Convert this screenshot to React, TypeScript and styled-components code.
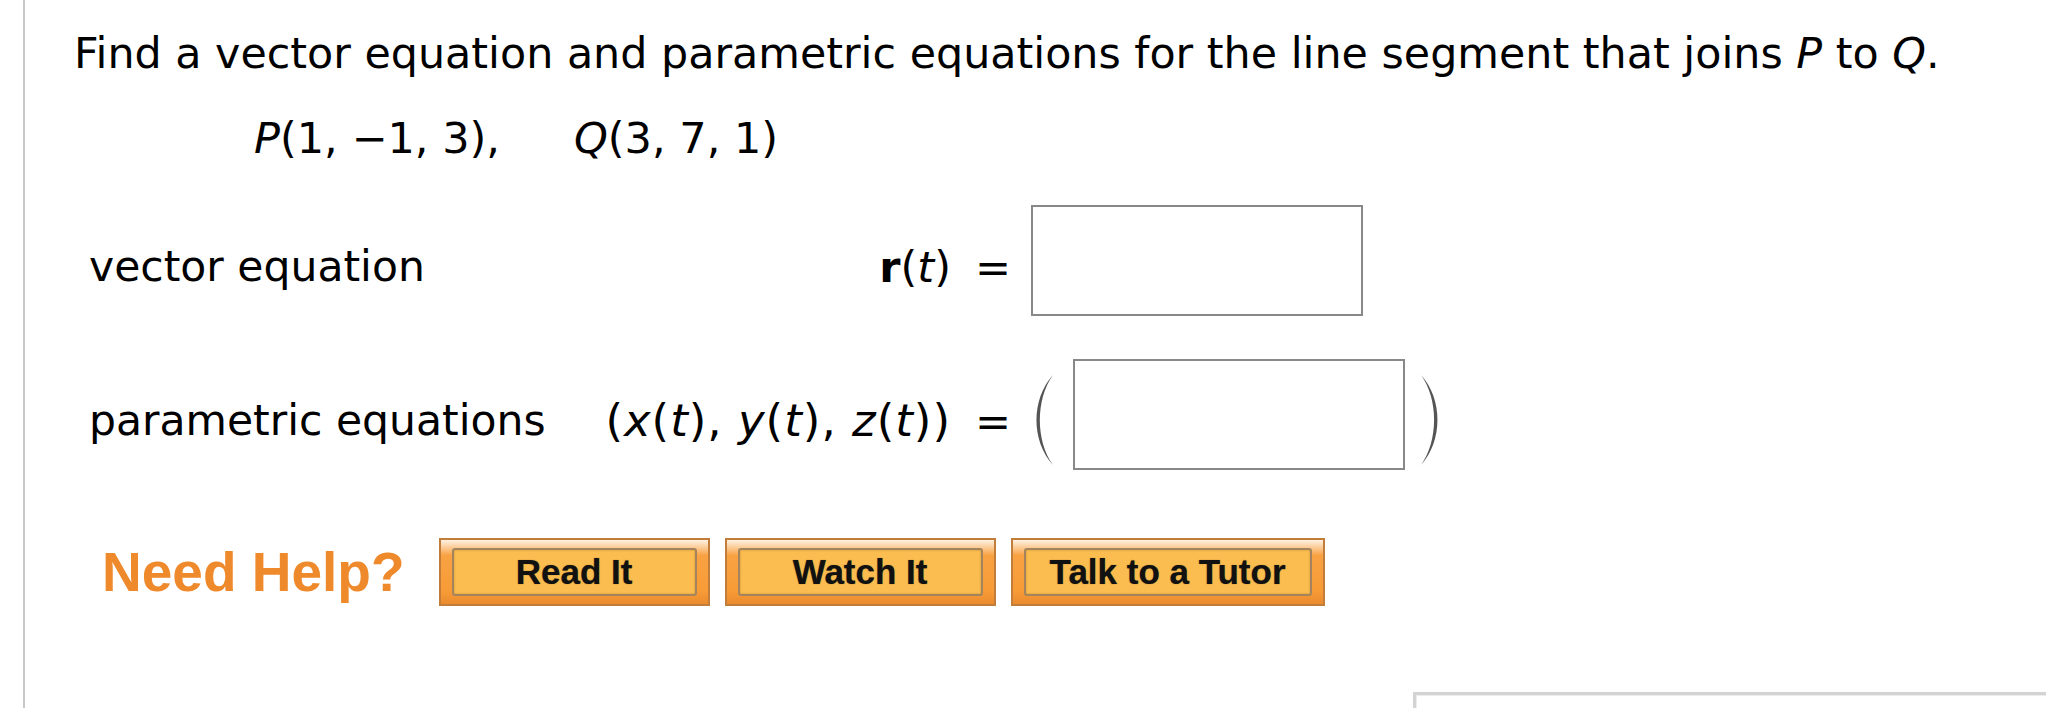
import React from "react";
import styled, { createGlobalStyle } from "styled-components";

const GlobalStyle = createGlobalStyle`
  html, body { margin: 0; padding: 0; background: #fff; overflow: hidden; }
  body { font-family: "DejaVu Sans", Verdana, sans-serif; color: #000; }
`;

const Page = styled.div`
  width: 2046px;
  height: 708px;
  display: flex;
  background: #fff;
`;

const Frame = styled.div`
  margin-left: 23px;
  border-left: 2px solid #c8c8c8;
  flex: 1;
  height: 708px;
  overflow: hidden;
  display: flex;
  flex-direction: column;
  padding: 28px 0 0 49px;
  box-sizing: border-box;
`;

const Title = styled.div`
  font-size: 42.8px;
  line-height: 50px;
  white-space: nowrap;
`;

const Points = styled.div`
  margin-top: 35px;
  padding-left: 180px;
  font-size: 43px;
  line-height: 50px;
  white-space: nowrap;
`;

const PointGap = styled.span`
  display: inline-block;
  width: 74px;
`;

const Answers = styled.div`
  margin-left: 15px;
  display: flex;
  flex-direction: column;
`;

const Row = styled.div<{ $top: number }>`
  display: grid;
  grid-template-columns: 450px 452px auto;
  column-gap: 20px;
  align-items: center;
  margin-top: ${(p) => p.$top}px;
`;

const Label = styled.div`
  font-size: 42.5px;
  line-height: 50px;
  padding-top: 13px;
  white-space: nowrap;
`;

const Expr = styled.div<{ $size?: number; $spacing?: number }>`
  font-size: ${(p) => p.$size ?? 43}px;
  line-height: 50px;
  padding-top: 13px;
  text-align: right;
  white-space: nowrap;
  letter-spacing: ${(p) => p.$spacing ?? 0}px;
`;

const Eq = styled.span`
  margin-left: 24px;
  letter-spacing: 0;
  font-size: 43px;
`;

const Bold = styled.b`
  font-weight: 700;
`;

const AnswerCell = styled.div`
  display: flex;
  align-items: center;
`;

const InputBox = styled.div`
  width: 332px;
  height: 111px;
  box-sizing: border-box;
  border: 2px solid #888;
  background: #fff;
`;

const ParenSvg = styled.svg<{ $gap: number; $side: "l" | "r" }>`
  width: 23px;
  height: 92px;
  margin-top: 11px;
  flex-shrink: 0;
  ${(p) => (p.$side === "l" ? `margin-right: ${p.$gap}px;` : `margin-left: ${p.$gap}px;`)}
`;

const HelpRow = styled.div`
  margin-top: 68px;
  margin-left: 28px;
  display: flex;
  align-items: center;
  gap: 15px;
`;

const NeedHelp = styled.span`
  font-family: "Liberation Sans", Arial, sans-serif;
  font-weight: 700;
  font-size: 55px;
  line-height: 60px;
  color: #ef8a2c;
  margin-right: 19px;
  white-space: nowrap;
`;

const HelpButton = styled.button<{ $w: number }>`
  width: ${(p) => p.$w}px;
  height: 68px;
  padding: 0;
  box-sizing: border-box;
  border: 2px solid #c27d3b;
  background: linear-gradient(
    to bottom,
    #fff2e2 0%,
    #fcd4a8 9%,
    #f9a243 24%,
    #f79b36 80%,
    #ea8b2e 100%
  );
  display: flex;
  cursor: pointer;
`;

const ButtonFace = styled.span`
  flex: 1;
  margin: 8px 11px;
  border: 2px solid #a4845c;
  border-radius: 3px;
  background: #fbbd4f;
  box-shadow: inset 0 0 2px rgba(120, 80, 30, 0.45);
  font-family: "Liberation Sans", Arial, sans-serif;
  font-weight: 700;
  font-size: 35px;
  line-height: 44px;
  color: #111;
  text-shadow: 0 0 1px rgba(0, 0, 0, 0.55);
  text-align: center;
  white-space: nowrap;
`;

const NextBox = styled.div`
  margin-top: 86px;
  margin-left: 1339px;
  width: 700px;
  height: 60px;
  flex-shrink: 0;
  box-sizing: border-box;
  border: 3px solid #d3d3d3;
  box-shadow: inset 0 0 0 1px #ececec;
`;

const Paren = ({ side, gap }: { side: "l" | "r"; gap: number }) => (
  <ParenSvg $side={side} $gap={gap} viewBox="0 0 23 92">
    {side === "l" ? (
      <path d="M22 1 C0 25, 0 67, 22 91 C4.5 67, 4.5 25, 22 1 Z" fill="#555" />
    ) : (
      <path d="M1 1 C23 25, 23 67, 1 91 C18.5 67, 18.5 25, 1 1 Z" fill="#555" />
    )}
  </ParenSvg>
);

export default function App() {
  return (
    <>
      <GlobalStyle />
      <Page>
        <Frame>
          <Title>
            Find a vector equation and parametric equations for the line segment that joins <i>P</i> to <i>Q</i>.
          </Title>
          <Points>
            <i>P</i>(1, −1, 3),
            <PointGap />
            <i>Q</i>(3, 7, 1)
          </Points>
          <Answers>
            <Row $top={42}>
              <Label>vector equation</Label>
              <Expr>
                <Bold>r</Bold>(<i>t</i>)<Eq>=</Eq>
              </Expr>
              <AnswerCell>
                <InputBox />
              </AnswerCell>
            </Row>
            <Row $top={43}>
              <Label>parametric equations</Label>
              <Expr $size={45} $spacing={1}>
                (<i>x</i>(<i>t</i>), <i>y</i>(<i>t</i>), <i>z</i>(<i>t</i>))<Eq>=</Eq>
              </Expr>
              <AnswerCell>
                <Paren side="l" gap={19} />
                <InputBox />
                <Paren side="r" gap={15} />
              </AnswerCell>
            </Row>
          </Answers>
          <HelpRow>
            <NeedHelp>Need Help?</NeedHelp>
            <HelpButton $w={271}>
              <ButtonFace>Read It</ButtonFace>
            </HelpButton>
            <HelpButton $w={271}>
              <ButtonFace>Watch It</ButtonFace>
            </HelpButton>
            <HelpButton $w={314}>
              <ButtonFace>Talk to a Tutor</ButtonFace>
            </HelpButton>
          </HelpRow>
          <NextBox />
        </Frame>
      </Page>
    </>
  );
}
